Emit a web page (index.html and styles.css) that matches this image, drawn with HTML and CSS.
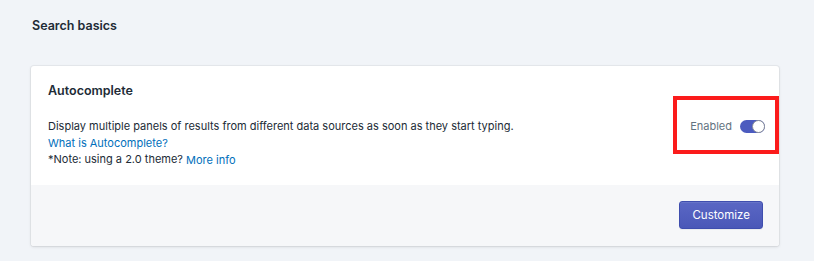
FILE: index.html
```html
<!DOCTYPE html>
<html lang="en">
<head>
<meta charset="utf-8">
<title>Search basics</title>
<link rel="stylesheet" href="styles.css">
</head>
<body>
<main class="page">
  <h2 class="page-title">Search basics</h2>
  <section class="card">
    <div class="card-body">
      <div class="card-text">
        <h3 class="card-title">Autocomplete</h3>
        <p class="desc">Display multiple panels of results from different data sources as soon as they start typing.</p>
        <p class="desc"><a class="link" href="#">What is Autocomplete?</a></p>
        <p class="desc">*Note: using a 2.0 theme? <a class="link more" href="#">More info</a></p>
      </div>
      <div class="status">
        <span class="status-label">Enabled</span>
        <span class="toggle" role="switch" aria-checked="true"><span class="knob"></span></span>
      </div>
      <div class="highlight"></div>
    </div>
    <div class="card-footer">
      <button class="btn-primary" type="button">Customize</button>
    </div>
  </section>
</main>
</body>
</html>
```

FILE: styles.css
```css
* { box-sizing: border-box; }
html, body { margin: 0; padding: 0; }
body {
  background: #f1f4f8;
  font-family: "Inter", "Liberation Sans", Arial, sans-serif;
  color: #212b36;
  width: 814px;
  height: 261px;
  overflow: hidden;
}
.page {
  padding: 17px 35px 0 31px;
}
.page-title {
  margin: 0 0 0 1px;
  font-size: 12.5px;
  line-height: 17px;
  font-weight: 600;
  color: #212b36;
}
.card {
  margin-top: 32px;
  background: #fff;
  border-radius: 3px;
  box-shadow: 0 0 0 1px rgba(63,63,68,0.05), 0 1px 3px 0 rgba(63,63,68,0.15);
}
.card-body {
  position: relative;
  display: flex;
  justify-content: space-between;
  align-items: flex-start;
  padding: 16px 14px 17px 17px;
  border-radius: 3px 3px 0 0;
}
.card-title {
  margin: 0 0 18px;
  font-size: 12.5px;
  line-height: 18px;
  font-weight: 600;
}
.desc {
  margin: 0;
  font-size: 11px;
  line-height: 16.6px;
  color: #212b36;
}
.more {
  position: relative;
  top: 1px;
}
.link {
  color: #006fbb;
  text-decoration: none;
}
.status {
  display: flex;
  align-items: center;
  gap: 8px;
  padding-top: 37px;
}
.status-label {
  font-size: 11px;
  color: #637381;
}
.toggle {
  position: relative;
  display: inline-block;
  width: 25px;
  height: 13px;
  border-radius: 7px;
  background: #4c5bbf;
}
.knob {
  position: absolute;
  right: 0;
  top: 0;
  width: 13px;
  height: 13px;
  border-radius: 50%;
  background: #fff;
  border: 1px solid #8a8f99;
}
.highlight {
  position: absolute;
  left: 642px;
  top: 30px;
  width: 106px;
  height: 58px;
  border: 4px solid #fb1b1b;
  pointer-events: none;
}
.card-footer {
  display: flex;
  justify-content: flex-end;
  background: #f6f7f9;
  padding: 16px 16px 17px;
  border-radius: 0 0 3px 3px;
}
.btn-primary {
  height: 28px;
  padding: 0 12px;
  font-family: inherit;
  font-size: 11.5px;
  color: #fff;
  background: linear-gradient(#5a67c4, #4b58b8);
  border: 1px solid #3f4eae;
  border-radius: 3px;
  box-shadow: inset 0 1px 0 0 #6774c8, 0 1px 0 0 rgba(22,29,37,0.05);
  cursor: pointer;
}
```
